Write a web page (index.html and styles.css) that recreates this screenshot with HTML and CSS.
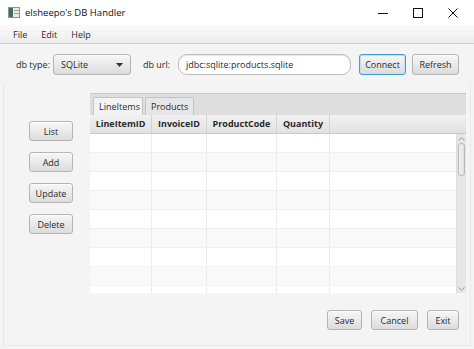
FILE: index.html
```html
<!DOCTYPE html>
<html lang="en">
<head>
    <meta charset="UTF-8">
    <title>elsheepo's DB Handler</title>
    <link rel="stylesheet" href="styles.css">
</head>
<body>
    <div class="window">
        <div class="titlebar">
            <svg class="app-icon" width="12" height="11" viewBox="0 0 12 11">
                <rect x="0.5" y="0.5" width="11" height="10" fill="#e8ece9" stroke="#8a9590"/>
                <rect x="1" y="1" width="4" height="9" fill="#3f6f62"/>
                <rect x="6" y="3" width="5" height="1" fill="#9aa5a0"/>
                <rect x="6" y="6" width="5" height="1" fill="#9aa5a0"/>
            </svg>
            <span class="title">elsheepo's DB Handler</span>
            <div class="controls">
                <span class="ctl">
                    <svg width="10" height="10" viewBox="0 0 10 10"><path d="M0 5.5h10" stroke="#111" stroke-width="1"/></svg>
                </span>
                <span class="ctl">
                    <svg width="10" height="10" viewBox="0 0 10 10"><rect x="0.5" y="0.5" width="9" height="9" fill="none" stroke="#111"/></svg>
                </span>
                <span class="ctl">
                    <svg width="10" height="10" viewBox="0 0 10 10"><path d="M0.5 0.5l9 9M9.5 0.5l-9 9" stroke="#111" stroke-width="1"/></svg>
                </span>
            </div>
        </div>

        <div class="menubar">
            <span class="menu">File</span>
            <span class="menu">Edit</span>
            <span class="menu">Help</span>
        </div>

        <div class="toolbar">
            <span class="lbl lbl-type">db type:</span>
            <div class="combo">
                <span>SQLite</span>
                <svg width="7" height="4" viewBox="0 0 7 4"><path d="M0 0h7L3.5 4z" fill="#333"/></svg>
            </div>
            <span class="lbl lbl-url">db url:</span>
            <div class="field">jdbc:sqlite:products.sqlite</div>
            <button class="btn btn-connect">Connect</button>
            <button class="btn btn-refresh">Refresh</button>
        </div>

        <div class="main">
            <div class="content">
                <div class="side">
                    <button class="btn side-btn">List</button>
                    <button class="btn side-btn">Add</button>
                    <button class="btn side-btn">Update</button>
                    <button class="btn side-btn">Delete</button>
                </div>

                <div class="tabpane">
                    <div class="tabs">
                        <span class="tab selected">LineItems</span>
                        <span class="tab">Products</span>
                    </div>
                    <div class="table">
                        <div class="thead">
                            <span class="th c1">LineItemID</span>
                            <span class="th c2">InvoiceID</span>
                            <span class="th c3">ProductCode</span>
                            <span class="th c4">Quantity</span>
                            <span class="th filler"></span>
                        </div>
                        <div class="tbody">
                            <div class="rows">
                                <div class="row"><span class="c1"></span><span class="c2"></span><span class="c3"></span><span class="c4"></span></div>
                                <div class="row"><span class="c1"></span><span class="c2"></span><span class="c3"></span><span class="c4"></span></div>
                                <div class="row"><span class="c1"></span><span class="c2"></span><span class="c3"></span><span class="c4"></span></div>
                                <div class="row"><span class="c1"></span><span class="c2"></span><span class="c3"></span><span class="c4"></span></div>
                                <div class="row"><span class="c1"></span><span class="c2"></span><span class="c3"></span><span class="c4"></span></div>
                                <div class="row"><span class="c1"></span><span class="c2"></span><span class="c3"></span><span class="c4"></span></div>
                                <div class="row"><span class="c1"></span><span class="c2"></span><span class="c3"></span><span class="c4"></span></div>
                                <div class="row"><span class="c1"></span><span class="c2"></span><span class="c3"></span><span class="c4"></span></div>
                                <div class="row"><span class="c1"></span><span class="c2"></span><span class="c3"></span><span class="c4"></span></div>
                            </div>
                            <div class="vscroll">
                                <svg class="arrow" width="7" height="4" viewBox="0 0 7 4"><path d="M0.5 3.5L3.5 0.8 6.5 3.5" fill="none" stroke="#999"/></svg>
                                <div class="thumb"></div>
                                <div class="track"></div>
                                <svg class="arrow" width="7" height="4" viewBox="0 0 7 4"><path d="M0.5 0.5L3.5 3.2 6.5 0.5" fill="none" stroke="#999"/></svg>
                            </div>
                        </div>
                    </div>
                </div>
            </div>

            <div class="actions">
                <button class="btn btn-save">Save</button>
                <button class="btn btn-cancel">Cancel</button>
                <button class="btn btn-exit">Exit</button>
            </div>
        </div>
    </div>
</body>
</html>
```

FILE: styles.css
```css
body {
    margin: 0;
    padding: 0;
    font-family: 'Open Sans', 'Noto Sans', sans-serif;
    font-size: 9px;
    color: #2b2b2b;
    background-color: #f4f4f4;
}

.window {
    width: 474px;
    height: 349px;
    display: flex;
    flex-direction: column;
    overflow: hidden;
}

/* title bar */
.titlebar {
    height: 25px;
    background: #ffffff;
    display: flex;
    align-items: center;
    padding-left: 8px;
}

.app-icon {
    margin-right: 5px;
}

.title {
    font-size: 9.5px;
    color: #111111;
}

.controls {
    margin-left: auto;
    display: flex;
    padding-right: 4px;
}

.ctl {
    width: 35px;
    height: 25px;
    display: flex;
    align-items: center;
    justify-content: center;
}

/* menu bar */
.menubar {
    height: 18px;
    display: flex;
    align-items: center;
    padding-left: 6px;
    background: linear-gradient(#fbfbfb, #ececec);
    border-bottom: 1px solid #cfcfcf;
}

.menu {
    padding: 0 7px;
}

/* toolbar */
.toolbar {
    height: 40px;
    display: flex;
    align-items: flex-start;
    padding: 10px 0 0 16px;
    box-sizing: border-box;
}

.lbl {
    line-height: 21px;
}

.lbl-type {
    width: 37px;
}

.lbl-url {
    width: 35px;
    margin-left: 12px;
}

.btn {
    font-family: inherit;
    font-size: 9px;
    color: #2b2b2b;
    height: 20px;
    padding: 0;
    background: linear-gradient(#f7f7f7, #dcdcdc);
    border: 1px solid #b4b4b4;
    border-radius: 3px;
    box-shadow: inset 0 1px 0 #ffffff;
    box-sizing: border-box;
}

.combo {
    width: 78px;
    height: 21px;
    display: flex;
    align-items: center;
    justify-content: space-between;
    padding: 0 7px 0 7px;
    box-sizing: border-box;
    background: linear-gradient(#f7f7f7, #dcdcdc);
    border: 1px solid #b4b4b4;
    border-radius: 3px;
    box-shadow: inset 0 1px 0 #ffffff;
}

.field {
    width: 173px;
    height: 21px;
    line-height: 19px;
    padding-left: 7px;
    box-sizing: border-box;
    background: #ffffff;
    border: 1px solid #bdbdbd;
    border-radius: 9px;
    box-shadow: inset 0 1px 1px #e6e6e6;
}

.btn-connect {
    width: 47px;
    height: 21px;
    margin-left: 8px;
    border-color: #3c9fd8;
    box-shadow: inset 0 0 0 1px #bfe0f3;
}

.btn-refresh {
    width: 47px;
    height: 21px;
    margin-left: 6px;
}

/* main panel */
.main {
    flex: 1;
    margin: 0 3px 3px 3px;
    border: 1px solid #e9e9e9;
    border-top: none;
    display: flex;
    flex-direction: column;
}

.content {
    display: flex;
    padding-top: 9px;
}

.side {
    width: 86px;
    display: flex;
    flex-direction: column;
    align-items: flex-start;
    padding: 28px 0 0 25px;
    box-sizing: border-box;
    gap: 11px;
}

.side-btn {
    width: 44px;
}

/* tab pane */
.tabpane {
    width: 376px;
    height: 200px;
    display: flex;
    flex-direction: column;
}

.tabs {
    height: 22px;
    display: flex;
    align-items: flex-end;
    padding-left: 3px;
    gap: 2px;
    background: #dedede;
    border-top: 1px solid #cacaca;
    box-sizing: border-box;
}

.tab {
    height: 18px;
    line-height: 17px;
    padding: 0 5px;
    background: #e6e6e6;
    border: 1px solid #c4c4c4;
    border-bottom: none;
    border-radius: 2px 2px 0 0;
    box-sizing: border-box;
}

.tab.selected {
    width: 50px;
    background: #f3f3f3;
}

.table {
    flex: 1;
    min-height: 0;
    display: flex;
    flex-direction: column;
    background: #ffffff;
}

.thead {
    height: 19px;
    flex-shrink: 0;
    display: flex;
    background: linear-gradient(#f1f1f1, #e1e1e1);
    border-bottom: 1px solid #c9c9c9;
    box-sizing: border-box;
}

.th {
    font-weight: 700;
    text-align: center;
    line-height: 18px;
    border-right: 1px solid #d3d3d3;
    box-sizing: border-box;
}

.th.filler {
    flex: 1;
    border-right: none;
}

.c1 { width: 62px; }
.c2 { width: 55px; }
.c3 { width: 70px; }
.c4 { width: 53px; }

.tbody {
    flex: 1;
    min-height: 0;
    display: flex;
    overflow: hidden;
}

.rows {
    flex: 1;
    overflow: hidden;
}

.row {
    height: 19px;
    display: flex;
    border-bottom: 1px solid #f0f0f0;
    box-sizing: border-box;
}

.row:nth-child(even) {
    background: #f9f9f9;
}

.row span {
    border-right: 1px solid #ececec;
    box-sizing: border-box;
}

.vscroll {
    width: 10px;
    display: flex;
    flex-direction: column;
    align-items: center;
    background: #e6e6e6;
    border-left: 1px solid #dcdcdc;
    box-sizing: border-box;
}

.arrow {
    margin: 3px 0 2px;
}

.thumb {
    width: 7px;
    height: 33px;
    background: linear-gradient(90deg, #f2f2f2, #e2e2e2);
    border: 1px solid #b8b8b8;
    border-radius: 3px;
    box-sizing: border-box;
}

.track {
    flex: 1;
}

/* bottom buttons */
.actions {
    display: flex;
    justify-content: flex-end;
    gap: 9px;
    padding: 17px 11px 0 0;
}

.btn-save { width: 35px; }
.btn-cancel { width: 47px; }
.btn-exit { width: 32px; }
```
